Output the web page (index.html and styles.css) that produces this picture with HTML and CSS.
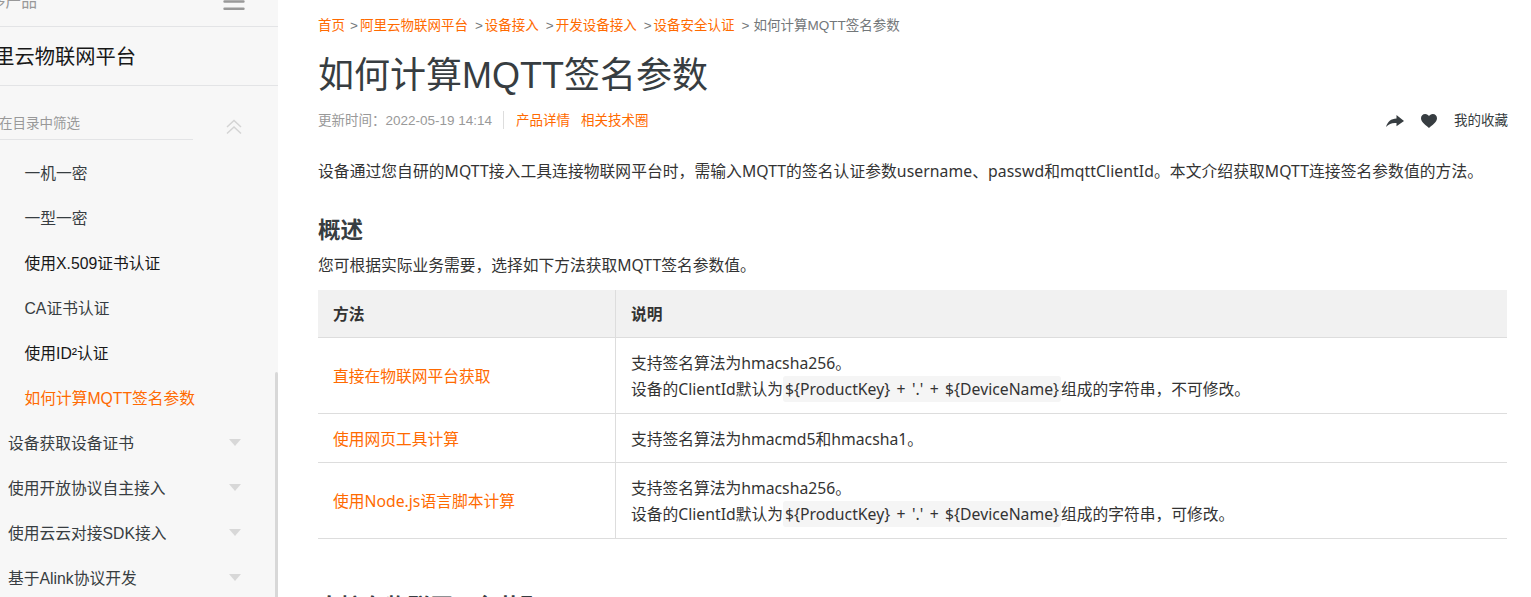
FILE: index.html
```html
<!DOCTYPE html>
<html lang="zh-CN">
<head>
  <meta charset="UTF-8" />
  <meta name="viewport" content="width=device-width, initial-scale=1.0"/>
  <title>如何计算MQTT签名参数</title>
  <link rel="stylesheet" href="styles.css">
</head>
<body>
  <div class="page">
    <!-- Sidebar -->
    <aside class="sidebar">
      <div class="sidebar-top">
        <span class="all-products">更多产品</span>
        <svg class="menu-icon" width="22" height="20" viewBox="0 0 22 20"><path d="M1.5 2h19M1.5 9.5h19M1.5 16.700h19" stroke="#999" stroke-width="2.4" stroke-linecap="round"/></svg>
      </div>
      <div class="sidebar-title">阿里云物联网平台</div>
      <div class="filter">
        <div class="filter-input">在目录中筛选</div>
        <svg class="collapse-icon" width="16" height="16" viewBox="0 0 16 16"><path d="M1 8l7-6.500 7 6.500M1 14.500l7-6.500 7 6.500" fill="none" stroke="#d4d4d4" stroke-width="1.500"/></svg>
      </div>
      <ul class="menu">
        <li class="sub">一机一密</li>
        <li class="sub">一型一密</li>
        <li class="sub visited">使用X.509证书认证</li>
        <li class="sub">CA证书认证</li>
        <li class="sub visited">使用ID²认证</li>
        <li class="sub active">如何计算MQTT签名参数</li>
        <li>设备获取设备证书<i class="arrow"></i></li>
        <li>使用开放协议自主接入<i class="arrow"></i></li>
        <li>使用云云对接SDK接入<i class="arrow"></i></li>
        <li>基于Alink协议开发<i class="arrow"></i></li>
      </ul>
      <div class="scroll-thumb"></div>
    </aside>

    <!-- Document -->
    <main class="content">
      <div class="breadcrumb">
        <a>首页</a><i>&gt;</i><a>阿里云物联网平台</a><i class="wide">&gt;</i><a>设备接入</a><i class="wide">&gt;</i><a>开发设备接入</a><i class="wide">&gt;</i><a>设备安全认证</a><i class="wide">&gt;</i><span class="current">如何计算MQTT签名参数</span>
      </div>
      <h1>如何计算MQTT签名参数</h1>
      <div class="meta">
        <span class="time">更新时间：2022-05-19 14:14</span>
        <a>产品详情</a>
        <a>相关技术圈</a>
        <div class="actions">
          <svg class="share" width="18" height="12" viewBox="0 0 18 12"><path d="M0 12C1.500 6.500 5 3.800 10.500 3.500V0L18 6l-7.500 5.300V8C6 7.600 3 8.800 0 12z" fill="#373d41"/></svg>
          <svg class="heart" width="16" height="14" viewBox="0 0 16 14"><path d="M8 14C5.500 11.800 0 8.500 0 4.300 0 1.800 1.800 0 4.200 0 6 0 7.300 1 8 2.200 8.700 1 10 0 11.800 0 14.200 0 16 1.800 16 4.300 16 8.500 10.500 11.800 8 14z" fill="#373d41"/></svg>
          <span class="favorites">我的收藏</span>
        </div>
      </div>
      <p class="intro">设备通过您自研的MQTT接入工具连接物联网平台时，需输入MQTT的签名认证参数username、passwd和mqttClientId。本文介绍获取MQTT连接签名参数值的方法。</p>
      <h2>概述</h2>
      <p class="summary">您可根据实际业务需要，选择如下方法获取MQTT签名参数值。</p>
      <table>
        <thead>
          <tr><th class="method">方法</th><th>说明</th></tr>
        </thead>
        <tbody>
          <tr class="tall">
            <td><a>直接在物联网平台获取</a></td>
            <td>支持签名算法为hmacsha256。<br>设备的ClientId默认为<code>${ProductKey} + '.' + ${DeviceName}</code>组成的字符串，不可修改。</td>
          </tr>
          <tr>
            <td><a>使用网页工具计算</a></td>
            <td>支持签名算法为hmacmd5和hmacsha1。</td>
          </tr>
          <tr class="tall">
            <td><a>使用Node.js语言脚本计算</a></td>
            <td>支持签名算法为hmacsha256。<br>设备的ClientId默认为<code>${ProductKey} + '.' + ${DeviceName}</code>组成的字符串，可修改。</td>
          </tr>
        </tbody>
      </table>
      <h2 class="next">直接在物联网平台获取</h2>
    </main>
  </div>
</body>
</html>
```
FILE: styles.css
```css
* {
  box-sizing: border-box;
}
body {
  margin: 0;
  height: 597px;
  overflow: hidden;
  background: #fff;
  color: #333;
  font-family: "Liberation Sans", "Noto Sans CJK SC", sans-serif;
  font-size: 15.75px;
}
a {
  color: #ff6a00;
}
i {
  font-style: normal;
}
.page {
  display: flex;
  height: 597px;
  overflow: hidden;
}

/* sidebar */
.sidebar {
  position: relative;
  width: 278px;
  height: 597px;
  flex: none;
  overflow: hidden;
  background: #f7f7f7;
  white-space: nowrap;
}
.sidebar-top {
  display: flex;
  justify-content: space-between;
  height: 27px;
  margin-left: -26px;
  padding-right: 33px;
  border-bottom: 1px solid #e3e4e6;
  color: #999;
  line-height: 24px;
}
.all-products {
  margin-top: -10px;
}
.menu-icon {
  margin-top: -8px;
}
.sidebar-title {
  height: 59px;
  margin-left: -26px;
  border-bottom: 1px solid #e3e4e6;
  color: #181818;
  font-size: 20.25px;
  line-height: 60px;
}
.filter {
  display: flex;
  justify-content: space-between;
  height: 64px;
  padding: 21px 36px 0 0;
}
.filter-input {
  width: 194px;
  height: 33px;
  margin-left: -1px;
  border-bottom: 1px solid #e3e4e6;
  color: #999;
  font-size: 13.5px;
  line-height: 34px;
}
.collapse-icon {
  margin-top: 12px;
}
.menu {
  margin: 0;
  padding: 0;
  list-style: none;
}
.menu li {
  display: flex;
  align-items: center;
  justify-content: space-between;
  height: 45px;
  padding: 0 37px 0 8px;
  color: #373d41;
}
.menu .sub {
  padding-left: 24.5px;
}
.menu .visited {
  color: #181818;
}
.menu .active {
  color: #ff6a00;
}
.arrow {
  border: 6.5px solid transparent;
  border-top: 7px solid #d8d8d8;
  border-bottom: 0;
}
.scroll-thumb {
  position: absolute;
  right: 0;
  top: 372px;
  width: 3px;
  height: 240px;
  border-radius: 2px 2px 0 0;
  background: #d8d8d8;
}

/* document */
.content {
  flex: 1;
  padding: 0 23px 0 40px;
  white-space: nowrap;
}
.breadcrumb {
  height: 51px;
  color: #73777a;
  font-size: 13.5px;
  line-height: 52px;
}
.breadcrumb i {
  margin: 0 2px 0 5px;
}
.breadcrumb .wide {
  margin-left: 7px;
}
.breadcrumb .current {
  margin-left: 2px;
}
h1 {
  margin: 0;
  height: 49px;
  color: #373d41;
  font-size: 36px;
  font-weight: normal;
  line-height: 49px;
}
.meta {
  display: flex;
  align-items: center;
  height: 40px;
  font-size: 13.5px;
}
.time {
  height: 18px;
  margin-right: 12px;
  padding-right: 11px;
  border-right: 1px solid #ddd;
  color: #999;
  line-height: 19px;
}
.meta a {
  margin: 0 11px 2px 0;
}
.actions {
  display: flex;
  align-items: center;
  margin-left: auto;
  color: #373d41;
}
.share {
  margin-top: 2px;
}
.heart {
  margin: 2px 17px 0;
}
.favorites {
  margin-bottom: 2px;
}
p,
table {
  font-family: "Noto Sans", "Noto Sans CJK SC", sans-serif;
}
.intro {
  margin: 18px 0 0;
  letter-spacing: 0.07px;
  line-height: 27px;
}
h2 {
  margin: 28px 0 0;
  color: #373d41;
  font-size: 22.5px;
  line-height: 36px;
}
.summary {
  margin: 3px 0 0;
  line-height: 27px;
}
table {
  width: 1189px;
  margin-top: 11px;
  border-collapse: separate;
  border-spacing: 0;
  table-layout: fixed;
}
th,
td {
  height: 49px;
  padding: 2px 15px 0;
  border-bottom: 1px solid #ddd;
  text-align: left;
  line-height: 26px;
}
th {
  height: 48px;
  padding-top: 1px;
  background: #f1f1f1;
}
th:first-child,
td:first-child {
  border-right: 1px solid #ddd;
}
.method {
  width: 298px;
}
.tall td {
  height: 76px;
  padding-top: 0;
}
code {
  padding: 2px;
  border-radius: 3px;
  background: #f5f5f5;
  font-family: inherit;
  word-spacing: 2.3px;
}
h2.next {
  margin-top: 51px;
}
```
